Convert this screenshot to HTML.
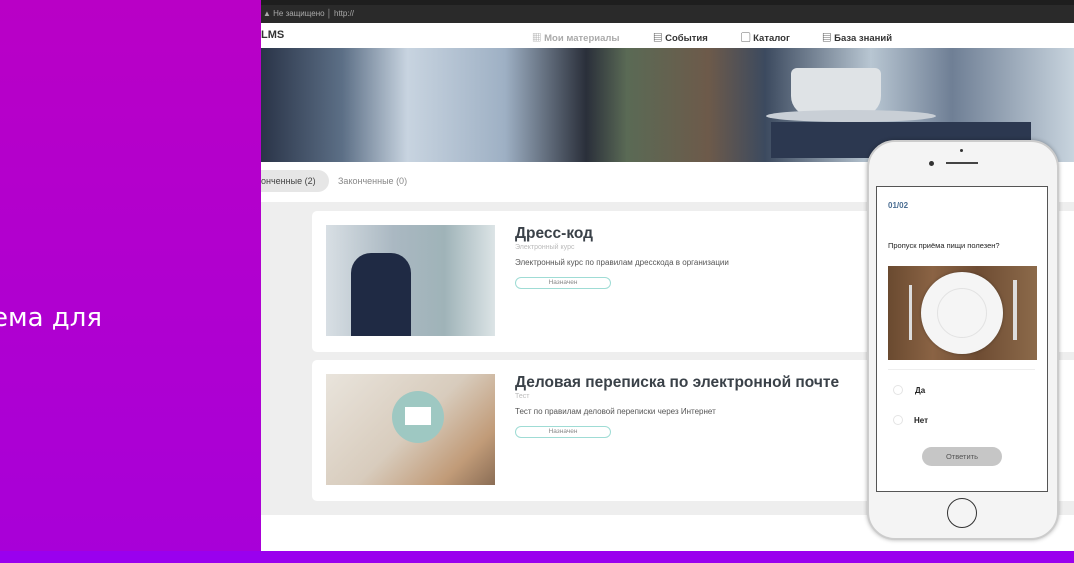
<!DOCTYPE html>
<html><head><meta charset="utf-8"><style>
*{margin:0;padding:0;box-sizing:border-box}
body{width:1074px;height:563px;overflow:hidden;position:relative;font-family:"Liberation Sans","Noto Sans CJK SC",sans-serif;background:linear-gradient(180deg,#b900c6 0%,#a800d8 100%)}
.abs{position:absolute}
.shot{left:261px;top:0;width:813px;height:551px;background:#fff;overflow:hidden}
.bar{left:0;top:0;width:813px;height:23px;background:#2a2a2a;border-top:5px solid #1e1e1e}
.bar span{position:absolute;top:4px;font-size:8px;color:#aaa}
.nav{top:23px;left:0;width:813px;height:25px;background:#fff}
.nav b{position:absolute;top:7px;font-size:9.5px;color:#333}
.hero{top:48px;left:0;width:813px;height:114px;background:linear-gradient(90deg,#2a3448 0%,#5c6f86 10%,#c8d4e0 18%,#9eb0c4 30%,#2a2f3a 40%,#5a6a55 45%,#6d5a4a 55%,#3c4a5f 62%,#b8c6d2 75%,#6f7f95 85%,#c8d4de 100%)}
.content{top:202px;left:0;width:813px;height:313px;background:#eee}
.card{left:51px;width:770px;height:141px;background:#fff;border-radius:5px}
.img{left:14px;top:14px;width:169px;height:111px}
.t{left:203px;font-size:15.5px;font-weight:bold;color:#3a4148}
.s{left:203px;font-size:7px;color:#bbb}
.d{left:203px;font-size:8px;color:#555}
.p{left:203px;width:96px;height:12px;border:1.5px solid #9fdcd5;border-radius:7px;font-size:6.5px;color:#888;text-align:center;line-height:9px}
</style></head><body>
<div class="abs" style="top:303px;color:#fff;font-size:26px;font-family:'DejaVu Sans',sans-serif;left:-8px">ема для</div>
<div class="abs" style="left:0;top:551px;width:1074px;height:12px;background:#9a00ee"></div>
<div class="abs shot">
 <div class="abs bar"><span style="left:2px">▲ Не защищено │ http://</span></div>
 <div class="abs nav">
  <b style="left:0;font-size:11px;top:6px">LMS</b>
  <b style="left:271px;color:#aaa">▦ Мои материалы</b>
  <b style="left:392px">▤ События</b>
  <b style="left:480px">▢ Каталог</b>
  <b style="left:561px">▤ База знаний</b>
 </div>
 <div class="abs hero"></div>
 <div class="abs" style="left:530px;top:68px;width:90px;height:48px;background:#dfe3e6;border-radius:6px 6px 20px 20px"></div>
 <div class="abs" style="left:505px;top:110px;width:170px;height:12px;background:#c9cfd6;border-radius:50%"></div>
 <div class="abs" style="left:510px;top:122px;width:260px;height:36px;background:#2c3850"></div>
 <div class="abs" style="left:-20px;top:170px;width:88px;height:22px;background:#e6e6e6;border-radius:11px"></div>
 <div class="abs" style="left:0;top:176px;font-size:9px;color:#444">ончeнные (2)</div>
 <div class="abs" style="left:77px;top:176px;font-size:9px;color:#888">Законченные (0)</div>
 <div class="abs content">
  <div class="abs card" style="top:9px">
   <div class="abs img" style="background:linear-gradient(90deg,#d8dfe4,#aab8c2 40%,#9fb3b8 70%,#dce4e6)"><div class="abs" style="left:25px;top:28px;width:60px;height:83px;background:#1f2a44;border-radius:20px 20px 0 0"></div></div>
   <div class="abs t" style="top:14px">Дресс-код</div>
   <div class="abs s" style="top:33px">Электронный курс</div>
   <div class="abs d" style="top:47px">Электронный курс по правилам дресскода в организации</div>
   <div class="abs p" style="top:66px">Назначен</div>
  </div>
  <div class="abs card" style="top:158px">
   <div class="abs img" style="background:linear-gradient(135deg,#e9e4dc,#d8ccbd 50%,#c19b78 80%,#8a6d55)"><div class="abs" style="left:66px;top:17px;width:52px;height:52px;border-radius:50%;background:#9ec8c2"></div><div class="abs" style="left:79px;top:33px;width:26px;height:18px;background:#fff"></div></div>
   <div class="abs t" style="top:14px">Деловая переписка по электронной почте</div>
   <div class="abs s" style="top:33px">Тест</div>
   <div class="abs d" style="top:47px">Тест по правилам деловой переписки через Интернет</div>
   <div class="abs p" style="top:66px">Назначен</div>
  </div>
 </div>
</div>
<div class="abs" style="left:867px;top:140px;width:192px;height:400px;background:#f4f4f4;border:2px solid #ccc;border-radius:28px;box-shadow:0 0 4px rgba(0,0,0,.3)"></div>
<div class="abs" style="left:960px;top:149px;width:3px;height:3px;background:#333;border-radius:50%"></div>
<div class="abs" style="left:929px;top:161px;width:5px;height:5px;background:#333;border-radius:50%"></div>
<div class="abs" style="left:946px;top:162px;width:32px;height:2px;background:#444"></div>
<div class="abs" style="left:876px;top:186px;width:172px;height:306px;background:#fff;border:1.5px solid #555"></div>
<div class="abs" style="left:888px;top:201px;font-size:8px;font-weight:bold;color:#4a6d92">01/02</div>
<div class="abs" style="left:888px;top:241px;font-size:7.5px;color:#222">Пропуск приёма пищи полезен?</div>
<div class="abs" style="left:888px;top:266px;width:149px;height:94px;background:linear-gradient(90deg,#6a4a30,#8a6344 30%,#6e4c33 60%,#8c6a4a)"></div>
<div class="abs" style="left:921px;top:272px;width:82px;height:82px;border-radius:50%;background:#f5f5f5;box-shadow:0 0 3px rgba(0,0,0,.3)"></div>
<div class="abs" style="left:937px;top:288px;width:50px;height:50px;border-radius:50%;border:1px solid #e2e2e2"></div>
<div class="abs" style="left:909px;top:285px;width:3px;height:55px;background:#ddd"></div>
<div class="abs" style="left:1013px;top:280px;width:4px;height:60px;background:#ddd"></div>
<div class="abs" style="left:888px;top:369px;width:147px;height:1px;background:#eee"></div>
<div class="abs" style="left:893px;top:385px;width:10px;height:10px;border-radius:50%;border:1px solid #e4e4e4"></div>
<div class="abs" style="left:915px;top:386px;font-size:8px;font-weight:bold;color:#222">Да</div>
<div class="abs" style="left:893px;top:415px;width:10px;height:10px;border-radius:50%;border:1px solid #e4e4e4"></div>
<div class="abs" style="left:914px;top:416px;font-size:8px;font-weight:bold;color:#222">Нет</div>
<div class="abs" style="left:922px;top:447px;width:80px;height:19px;border-radius:10px;background:#c6c6c6;font-size:7.5px;color:#555;text-align:center;line-height:19px">Ответить</div>
<div class="abs" style="left:947px;top:498px;width:30px;height:30px;border-radius:50%;border:1.5px solid #333"></div>
</body></html>
